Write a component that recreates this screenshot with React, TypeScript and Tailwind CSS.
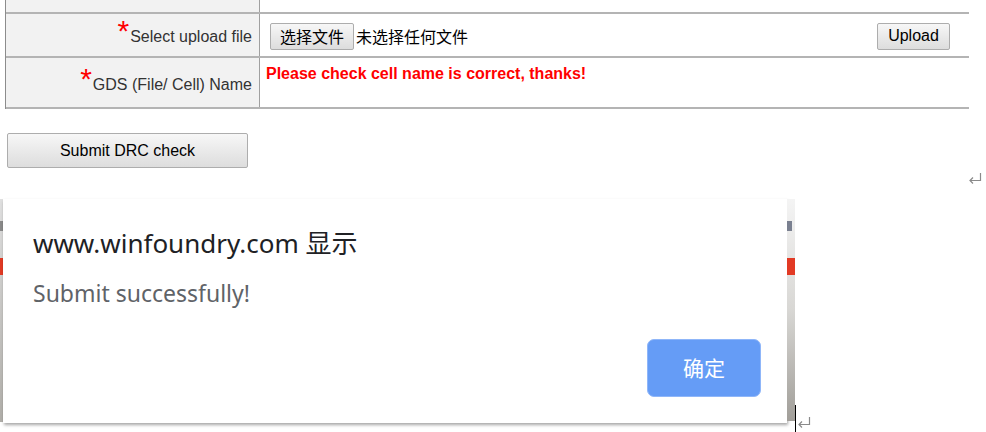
import React from "react";

function ReturnMark() {
  return (
    <svg width="14" height="12" viewBox="0 0 14 12" fill="none" stroke="#8a8a8a" strokeWidth="1.2">
      <path d="M12.5 1v7.5H2" />
      <path d="M5 5.5L2 8.5l3 3" />
    </svg>
  );
}

const btn =
  "border border-[#adadad] rounded-[2px] bg-gradient-to-b from-[#f7f7f7] to-[#dddddd] text-[16px] text-black leading-none";

function Star() {
  return <span className="text-[#ff0000] text-[30px] leading-none align-top relative top-[-4px] mr-[1px]">*</span>;
}

export default function App() {
  return (
    <div className="w-[986px] h-[432px] bg-white overflow-hidden relative font-['Liberation_Sans',Arial,sans-serif]">
      {/* form table */}
      <div className="ml-[5px] w-[964px] border-l border-[#8c8c8c]">
        <div className="grid grid-cols-[254px_1fr] h-[14px] border-b-2 border-[#b4b4b4]">
          <div className="bg-[#f2f2f2] border-r border-[#a0a0a0]" />
          <div />
        </div>
        <div className="grid grid-cols-[254px_1fr] h-[44px] border-b-2 border-[#b4b4b4]">
          <div className="bg-[#f2f2f2] border-r border-[#a0a0a0] flex items-center justify-end pr-[7px] text-[16px] text-[#333]">
            <Star />
            <span className="pt-[4px]">Select upload file</span>
          </div>
          <div className="flex items-center pl-[10px] pr-[19px] pt-[2px]">
            <button className={`${btn} h-[27px] px-[9px] font-['Noto_Sans_CJK_SC',sans-serif] text-[15px]`}>选择文件</button>
            <span className="ml-[2px] text-black font-['Noto_Sans_CJK_SC',sans-serif] text-[16px]">未选择任何文件</span>
            <button className={`${btn} ml-auto h-[27px] w-[73px]`}>Upload</button>
          </div>
        </div>
        <div className="grid grid-cols-[254px_1fr] h-[51px] border-b-2 border-[#b4b4b4]">
          <div className="bg-[#f2f2f2] border-r border-[#a0a0a0] flex items-center justify-end pr-[7px] text-[16px] text-[#333]">
            <Star />
            <span className="pt-[4px]">GDS (File/ Cell) Name</span>
          </div>
          <div className="pl-[6px] pt-[4px] text-[16px] font-bold text-[#ff0000]">
            Please check cell name is correct, thanks!
          </div>
        </div>
      </div>

      <button className={`${btn} ml-[7px] mt-[24px] w-[241px] h-[35px]`}>Submit DRC check</button>

      <div className="h-[31px] flex items-start pt-[4px] pl-[968px]">
        <ReturnMark />
      </div>

      {/* captured dialog */}
      <div className="flex items-start">
        <div className="w-[3px] h-[223px] flex flex-col bg-gradient-to-b from-[#e0e0e0] to-[#b0aea9]">
          <div className="h-[22px]" />
          <div className="h-[10px] bg-[#8a8a8a]" />
          <div className="h-[27px]" />
          <div className="h-[17px] bg-[#e23a24]" />
        </div>
        <div className="w-[784px] h-[224px] bg-white shadow-[1px_2px_3px_rgba(0,0,0,0.35)] flex flex-col pl-[30px] pr-[26px] font-['Segoe_UI','Noto_Sans','Noto_Sans_CJK_SC',sans-serif]">
          <div className="mt-[27px] text-[26px] leading-[34px] text-[#202124]">www.winfoundry.com 显示</div>
          <div className="mt-[18px] text-[23px] leading-[30px] text-[#5f6368]">Submit successfully!</div>
          <div className="mt-auto mb-[26px] flex justify-end">
            <button className="w-[114px] h-[58px] rounded-[7px] bg-[#659cf6] border border-[#8fb6f9] text-white text-[21px] font-['Noto_Sans_CJK_SC',sans-serif]">
              确定
            </button>
          </div>
        </div>
        <div className="w-[8px] h-[222px] flex flex-col bg-gradient-to-b from-[#f4f4f4] via-[#d8d7d4] to-[#a19e99]">
          <div className="h-[22px]" />
          <div className="h-[10px] bg-[#7a8090] w-[5px]" />
          <div className="h-[27px]" />
          <div className="h-[17px] bg-[#e23a24]" />
        </div>
        <div className="h-[233px] flex items-end">
          <div className="w-px h-[27px] bg-black" />
          <div className="mb-[4px] ml-[1px]">
            <ReturnMark />
          </div>
        </div>
      </div>
    </div>
  );
}
